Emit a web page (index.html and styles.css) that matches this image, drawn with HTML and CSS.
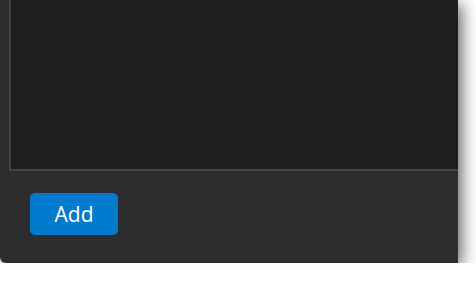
FILE: index.html
```html
<!DOCTYPE html>
<html>
<head>
<meta charset="utf-8">
<link rel="stylesheet" href="styles.css">
</head>
<body>
<div class="window">
  <div class="panel"></div>
  <div class="footer">
    <button class="btn">Add</button>
  </div>
</div>
</body>
</html>
```
FILE: styles.css
```css
html, body {
  margin: 0;
  padding: 0;
  background: #ffffff;
}
.window {
  width: 458px;
  height: 263px;
  background: #2d2d30;
  border-bottom-left-radius: 6px;
  box-shadow: 4px 4px 16px rgba(0, 0, 0, 0.6);
  display: flex;
  flex-direction: column;
}
.panel {
  margin-left: 9px;
  height: 169px;
  background: #1e1e1e;
  border-left: 2px solid #434346;
  border-bottom: 2px solid #434346;
}
.footer {
  padding: 22px 0 0 30px;
}
.btn {
  width: 88px;
  height: 42px;
  border: none;
  border-radius: 5px;
  background: #007acc;
  color: #ffffff;
  font-family: "Open Sans", "Noto Sans", sans-serif;
  font-size: 21px;
  line-height: 42px;
  padding: 0;
  cursor: pointer;
}
```
